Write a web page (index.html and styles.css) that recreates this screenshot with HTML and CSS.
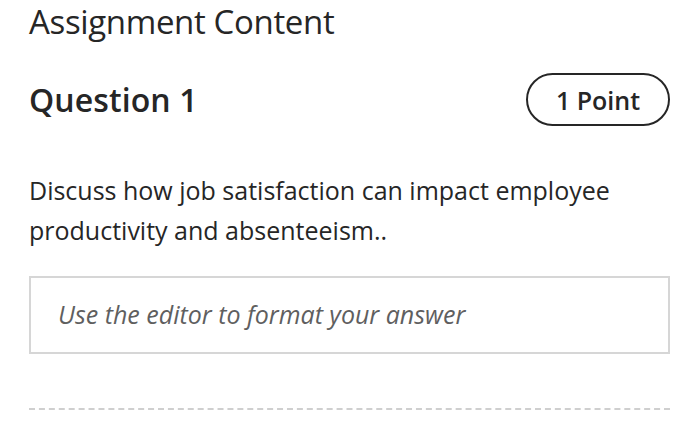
FILE: index.html
```html
<!DOCTYPE html>
<html>
<head>
<meta charset="utf-8">
<link rel="stylesheet" href="styles.css">
</head>
<body>
<div class="page">
  <h1 class="title">Assignment Content</h1>
  <div class="qhead">
    <h2 class="qtitle">Question 1</h2>
    <span class="points">1 Point</span>
  </div>
  <p class="prompt">Discuss how job satisfaction can impact employee productivity and absenteeism..</p>
  <div class="editor"><span class="placeholder">Use the editor to format your answer</span></div>
  <div class="divider"></div>
</div>
</body>
</html>
```

FILE: styles.css
```css
html, body {
  margin: 0;
  padding: 0;
  background: #fff;
}
body {
  font-family: "Open Sans", "Noto Sans", sans-serif;
  color: #262626;
}
.page {
  width: 641px;
  padding: 0 30px 0 29px;
}
.title {
  margin: 0;
  padding-top: 2px;
  font-size: 33px;
  font-weight: 400;
  line-height: 40px;
  letter-spacing: -0.35px;
}
.qhead {
  display: flex;
  justify-content: space-between;
  align-items: center;
  margin-top: 31px;
}
.qtitle {
  margin: 0;
  font-size: 32px;
  font-weight: 600;
  line-height: 40px;
  letter-spacing: 0.1px;
}
.points {
  box-sizing: border-box;
  width: 144px;
  height: 53px;
  border: 2px solid #262626;
  border-radius: 27px;
  display: flex;
  align-items: center;
  justify-content: center;
  font-size: 25px;
  font-weight: 600;
  letter-spacing: 0;
}
.prompt {
  margin: 44px 0 0;
  font-size: 25px;
  line-height: 40px;
  letter-spacing: 0;
}
.editor {
  margin-top: 26px;
  height: 78px;
  box-sizing: border-box;
  border: 2px solid #d6d6d6;
  display: flex;
  align-items: center;
  padding-left: 27px;
  padding-bottom: 2px;
}
.placeholder {
  font-style: italic;
  font-size: 25px;
  color: #5f5f5f;
  letter-spacing: 0;
}
.divider {
  margin-top: 54px;
  border-top: 2px dashed #cfcfcf;
}
```
